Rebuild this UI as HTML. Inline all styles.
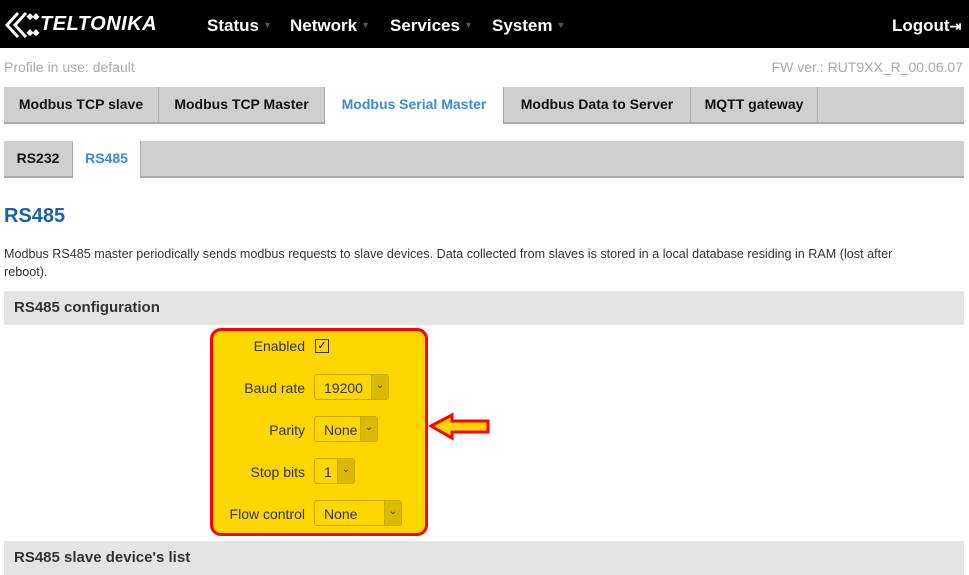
<!DOCTYPE html>
<html><head><style>
body{margin:0;width:969px;height:575px;overflow:hidden;background:#fff;font-family:"Liberation Sans",sans-serif;position:relative}
.a{position:absolute}
.hdr{left:0;top:0;width:969px;height:48px;background:#000;color:#fff}
.nav{font-weight:bold;font-size:17px;top:16px}
.nav i{font-style:normal;color:#555;font-size:9px;margin-left:4px;vertical-align:3px}
.tabs{background:#cfcfcf;border-bottom:2px solid #aaa}
.tab{position:absolute;top:0;height:35px;line-height:35px;font-weight:bold;font-size:14px;color:#111;border-right:1px solid #aaa;text-align:center}
.sel{background:#fff;color:#3a8ad8;height:37px}
.sec{left:4px;width:960px;height:34px;background:#e4e4e4;line-height:34px;font-weight:bold;font-size:15px;color:#333;text-indent:10px}
.lbl{font-size:14px;color:#333;text-align:right;width:95px;left:210px}
.sel2{border:1px solid #c9a800;border-radius:3px;height:26px;background:#ffd700;font-size:14px;color:#333;line-height:26px;box-sizing:border-box;padding-left:9px}
.sel2 b{position:absolute;right:0;top:0;width:16px;height:24px;background:#dcb800;border-left:1px solid #c9a800;font-weight:normal;font-size:10px;text-align:center;line-height:22px}
</style></head><body>
<div class="a hdr">
<svg class="a" style="left:4px;top:10px" width="42" height="30" viewBox="0 0 42 30"><g fill="none" stroke="#fff" stroke-width="3"><path d="M14 3 L3 15 L14 27"/><path d="M22 3 L11 15 L22 27"/></g><g fill="#fff"><rect x="24" y="4" width="5" height="5" transform="rotate(45 26 6)"/><rect x="30" y="4" width="5" height="5" transform="rotate(45 32 6)"/><rect x="24" y="20" width="5" height="5" transform="rotate(45 26 22)"/><rect x="30" y="20" width="5" height="5" transform="rotate(45 32 22)"/></g></svg>
<div class="a" style="left:40px;top:13px;font-weight:bold;font-style:italic;font-size:20px;letter-spacing:0.5px">TELTONIKA</div>
<div class="a nav" style="left:207px">Status<i>▼</i></div>
<div class="a nav" style="left:290px">Network<i>▼</i></div>
<div class="a nav" style="left:390px">Services<i>▼</i></div>
<div class="a nav" style="left:492px">System<i>▼</i></div>
<div class="a nav" style="left:892px">Logout<span style="font-size:14px">⇥</span></div>
</div>
<div class="a" style="left:4px;top:59px;font-size:14px;color:#aaa">Profile in use: default</div>
<div class="a" style="right:6px;top:59px;font-size:14px;color:#aaa">FW ver.: RUT9XX_R_00.06.07</div>
<div class="a tabs" style="left:4px;top:87px;width:960px;height:35px">
<div class="tab" style="left:0;width:154px">Modbus TCP slave</div>
<div class="tab" style="left:155px;width:165px">Modbus TCP Master</div>
<div class="tab sel" style="left:321px;width:178px">Modbus Serial Master</div>
<div class="tab" style="left:500px;width:186px">Modbus Data to Server</div>
<div class="tab" style="left:687px;width:126px">MQTT gateway</div>
</div>
<div class="a tabs" style="left:4px;top:141px;width:960px;height:35px">
<div class="tab" style="left:0;width:68px">RS232</div>
<div class="tab sel" style="left:69px;width:67px">RS485</div>
</div>
<div class="a" style="left:4px;top:205px;font-size:20px;font-weight:bold;color:#1f5faa">RS485</div>
<div class="a" style="left:4px;top:245px;width:928px;font-size:12.6px;line-height:18px;color:#333">Modbus RS485 master periodically sends modbus requests to slave devices. Data collected from slaves is stored in a local database residing in RAM (lost after reboot).</div>
<div class="a sec" style="top:291px">RS485 configuration</div>
<div class="a" style="left:210px;top:328px;width:212px;height:202px;background:#ffd700;border:3px solid #f00;border-radius:11px"></div>
<div class="a lbl" style="top:338px">Enabled</div>
<div class="a" style="left:315px;top:339px;width:12px;height:12px;border:1px solid #333;font-size:11px;line-height:12px;text-align:center">✓</div>
<div class="a lbl" style="top:380px">Baud rate</div>
<div class="a sel2" style="left:314px;top:374px;width:75px">19200<b>⌄</b></div>
<div class="a lbl" style="top:422px">Parity</div>
<div class="a sel2" style="left:314px;top:416px;width:64px">None<b>⌄</b></div>
<div class="a lbl" style="top:464px">Stop bits</div>
<div class="a sel2" style="left:314px;top:458px;width:41px">1<b>⌄</b></div>
<div class="a lbl" style="top:506px">Flow control</div>
<div class="a sel2" style="left:314px;top:500px;width:88px">None<b>⌄</b></div>
<svg class="a" style="left:428px;top:411px" width="64" height="32" viewBox="0 0 64 32"><path d="M3 15 L24 4 L24 10 L60 10 L60 21 L24 21 L24 27 Z" fill="#ffd700" stroke="#f00" stroke-width="3"/></svg>
<div class="a sec" style="top:541px">RS485 slave device's list</div>
</body></html>
